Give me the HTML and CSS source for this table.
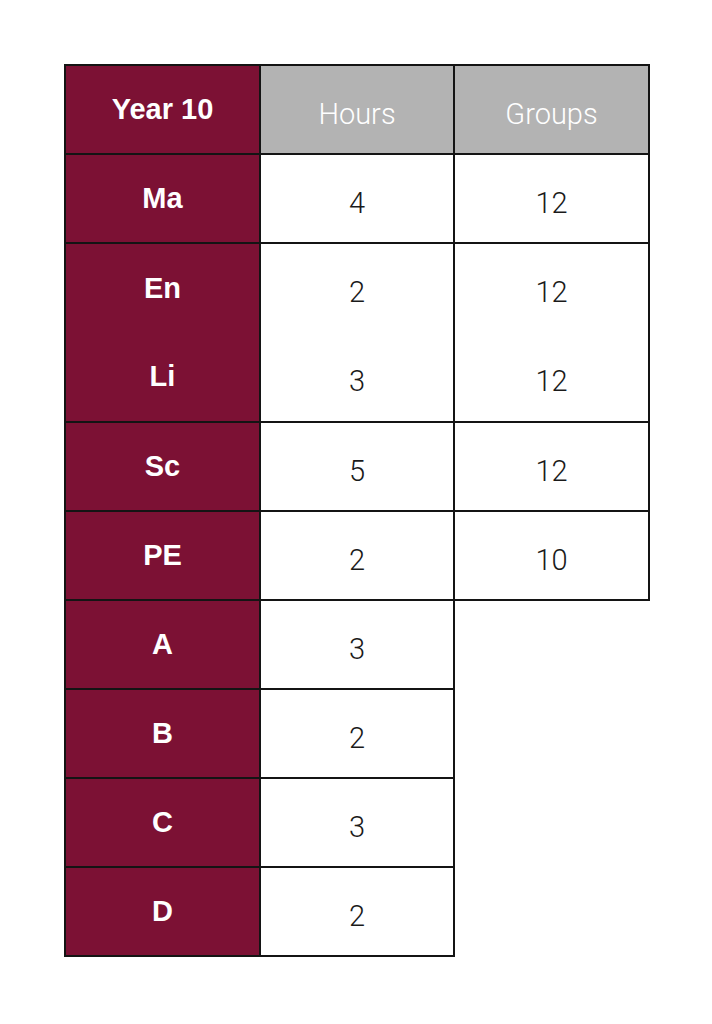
FILE: index.html
```html
<!DOCTYPE html>
<html>
<head>
<meta charset="utf-8">
<link rel="stylesheet" href="styles.css">
</head>
<body>
<table class="grid">
  <colgroup>
    <col class="c1"><col class="c2"><col class="c3">
  </colgroup>
  <tr class="row">
    <td class="subj">Year 10</td>
    <td class="head"><span>Hours</span></td>
    <td class="head"><span>Groups</span></td>
  </tr>
  <tr class="row">
    <td class="subj">Ma</td>
    <td class="val"><span>4</span></td>
    <td class="val"><span>12</span></td>
  </tr>
  <tr class="row double">
    <td class="subj"><div class="half">En</div><div class="half">Li</div></td>
    <td class="val"><div class="half"><span>2</span></div><div class="half"><span>3</span></div></td>
    <td class="val"><div class="half"><span>12</span></div><div class="half"><span>12</span></div></td>
  </tr>
  <tr class="row">
    <td class="subj">Sc</td>
    <td class="val"><span>5</span></td>
    <td class="val"><span>12</span></td>
  </tr>
  <tr class="row">
    <td class="subj">PE</td>
    <td class="val"><span>2</span></td>
    <td class="val"><span>10</span></td>
  </tr>
  <tr class="row">
    <td class="subj">A</td>
    <td class="val"><span>3</span></td>
    <td class="empty"></td>
  </tr>
  <tr class="row">
    <td class="subj">B</td>
    <td class="val"><span>2</span></td>
    <td class="empty"></td>
  </tr>
  <tr class="row">
    <td class="subj">C</td>
    <td class="val"><span>3</span></td>
    <td class="empty"></td>
  </tr>
  <tr class="row">
    <td class="subj">D</td>
    <td class="val"><span>2</span></td>
    <td class="empty"></td>
  </tr>
</table>
</body>
</html>
```

FILE: styles.css
```css
html, body {
  margin: 0;
  padding: 0;
  background: #ffffff;
}

body {
  padding: 64px 0 0 64px;
}

.grid {
  border-collapse: collapse;
  table-layout: fixed;
  width: 584px;
}

.c1 { width: 195px; }
.c2 { width: 194px; }
.c3 { width: 195px; }

.grid td {
  border: 2px solid #141414;
  padding: 0;
  height: 87px;
  text-align: center;
  vertical-align: middle;
  font-size: 29px;
}

.grid td.empty {
  border: none;
}

.subj {
  background: #7c1134;
  color: #ffffff;
  font-family: "Liberation Sans", Arial, sans-serif;
  font-weight: bold;
  font-size: 30px;
}

.head {
  background: #b3b3b3;
  color: #ffffff;
  font-family: "Roboto", "Liberation Sans", sans-serif;
  font-weight: 300;
}

.val {
  background: #ffffff;
  color: #1a1a1a;
  font-family: "Roboto", "Liberation Sans", sans-serif;
  font-weight: 300;
}

.head span,
.val span {
  display: inline-block;
  padding-top: 8px;
}

.grid .double td {
  height: 177px;
}

.half {
  height: 88.5px;
  display: flex;
  align-items: center;
  justify-content: center;
}
```
